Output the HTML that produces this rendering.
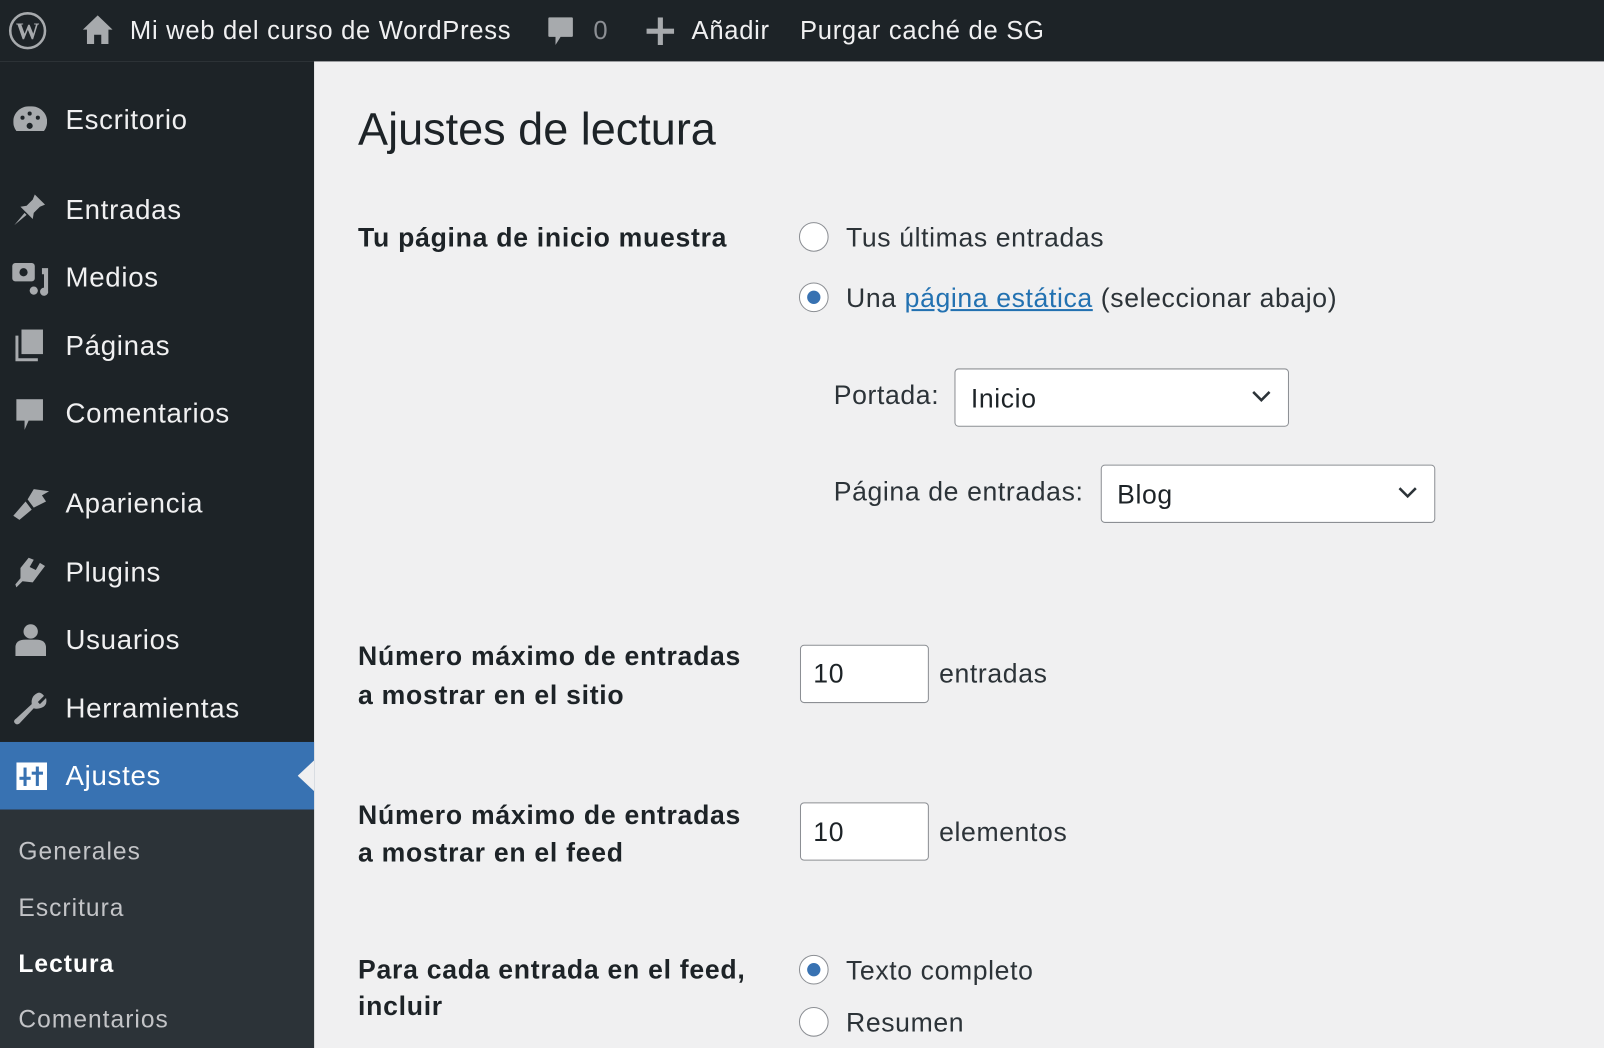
<!DOCTYPE html>
<html><head><meta charset="utf-8"><style>
html,body{margin:0;padding:0;overflow:hidden;background:#f0f0f1}
body{width:1604px;height:1048px}
#w{position:absolute;left:0;top:0;width:1568px;height:1024px;transform:scale(1.023,1.0234);transform-origin:0 0;font-family:"Liberation Sans",sans-serif;background:#f0f0f1}
.a{position:absolute;white-space:nowrap;line-height:34px;height:34px}
#top{position:absolute;left:0;top:0;width:1568px;height:60px;background:#1d2327}
#side{position:absolute;left:0;top:60px;width:307px;height:964px;background:#1d2327}
#sub{position:absolute;left:0;top:791px;width:307px;height:233px;background:#2c3338}
#aj{position:absolute;left:0;top:725px;width:307px;height:66px;background:#3872b2}
.tb{color:#f0f0f1;font-size:25px;letter-spacing:0.7px}
.m{color:#f0f0f1;font-size:27px;left:64px;letter-spacing:0.7px}
.s{color:#c3c4c7;font-size:24px;left:18px;letter-spacing:1px}
.ic{position:absolute;fill:#a7aaad}
.l{color:#1d2327;font-size:26px;font-weight:bold;left:350px;letter-spacing:0.7px}
.t{color:#2c3338;font-size:26px;letter-spacing:0.6px}
.r{position:absolute;width:27px;height:27px;border:1.5px solid #8c8f94;border-radius:50%;background:#fff}
.r.c::after{content:"";position:absolute;left:7px;top:7px;width:13px;height:13px;border-radius:50%;background:#3872b2}
.sel{position:absolute;height:57px;border:1px solid #8c8f94;border-radius:4px;background:#fff;box-sizing:border-box}
.in{position:absolute;width:126px;height:57px;border:1px solid #8c8f94;border-radius:4px;background:#fff;box-sizing:border-box}
</style></head><body><div id="w">
<div id="top"></div>
<svg class="ic" style="left:8px;top:11px" width="38" height="38" viewBox="0 0 38 38"><circle cx="19" cy="19" r="17" fill="none" stroke="#a7aaad" stroke-width="2.5"/><text x="19" y="27" text-anchor="middle" font-family="Liberation Serif" font-size="23" font-weight="bold" fill="#a7aaad">W</text></svg>
<svg class="ic" style="left:80px;top:14px" width="31" height="30" viewBox="0 0 31 30"><path d="M15.5 1 L1 15 L5 15 L5 29 L12 29 L12 20 L19 20 L19 29 L26 29 L26 15 L30 15 Z"/></svg>
<div class="a tb" style="left:127px;top:13px">Mi web del curso de WordPress</div>
<svg class="ic" style="left:535px;top:16px" width="26" height="30" viewBox="0 0 26 30"><path d="M2 1 H24 Q25 1 25 2 V19 Q25 20 24 20 H13 L8 28 V20 H2 Q1 20 1 19 V2 Q1 1 2 1Z"/></svg>
<div class="a tb" style="left:580px;top:13px;color:#8c8f94">0</div>
<svg class="ic" style="left:632px;top:17px" width="27" height="27"><rect x="11" y="0" width="5" height="27"/><rect x="0" y="11" width="27" height="5"/></svg>
<div class="a tb" style="left:676px;top:13px">Añadir</div>
<div class="a tb" style="left:782px;top:13px">Purgar caché de SG</div>

<div id="side"></div><div id="sub"></div><div id="aj"></div>
<svg style="position:absolute;left:291px;top:743px" width="16" height="30"><path d="M16 0 L0 15 L16 30Z" fill="#f0f0f1"/></svg>
<svg class="ic" style="left:13px;top:102px" width="33" height="30" viewBox="0 0 33 30"><path d="M16.5 2 A15 15 0 0 0 3 26 L30 26 A15 15 0 0 0 16.5 2Z"/><circle cx="16" cy="21" r="3" fill="#1d2327"/><circle cx="9" cy="13" r="2" fill="#1d2327"/><circle cx="16" cy="9" r="2" fill="#1d2327"/><circle cx="24" cy="13" r="2" fill="#1d2327"/></svg>
<div class="a m" style="top:100px">Escritorio</div>
<svg class="ic" style="left:12px;top:188px" width="34" height="34" viewBox="0 0 34 34"><path d="M22 2 L32 12 L27 14 L21 20 L20 26 L8 14 L14 13 L20 7Z M12 20 L2 32 L14 22Z"/></svg>
<div class="a m" style="top:188px">Entradas</div>
<svg class="ic" style="left:11px;top:254px" width="38" height="36" viewBox="0 0 38 36"><rect x="1" y="3" width="22" height="18" rx="3"/><circle cx="12" cy="12" r="4" fill="#1d2327"/><path d="M30 8 H36 V30 A4 4 0 1 1 32 27 V14 H30Z"/><circle cx="22" cy="30" r="4"/></svg>
<div class="a m" style="top:254px">Medios</div>
<svg class="ic" style="left:15px;top:322px" width="28" height="32"><rect x="6" y="0" width="21" height="24"/><path d="M0 6 H3 V28 H22 V31 H0Z"/></svg>
<div class="a m" style="top:321px">Páginas</div>
<svg class="ic" style="left:15px;top:390px" width="28" height="32"><path d="M1 0 H27 V21 H13 L9 30 V21 H1Z"/></svg>
<div class="a m" style="top:387px">Comentarios</div>
<svg class="ic" style="left:11px;top:476px" width="38" height="34" viewBox="0 0 38 34"><path d="M22 2 L37 4 L30 8 L34 14 L22 20 L16 12Z M14 14 L20 22 L8 32 L2 28Z"/></svg>
<div class="a m" style="top:475px">Apariencia</div>
<svg class="ic" style="left:14px;top:543px" width="32" height="32" viewBox="0 0 32 32"><path d="M14 2 L19 4 L15 11 L21 14 L25 7 L30 10 L24 18 L18 26 L8 25 L2 31 L1 28 L6 22 L6 12Z"/></svg>
<div class="a m" style="top:542px">Plugins</div>
<svg class="ic" style="left:15px;top:609px" width="30" height="32"><circle cx="15" cy="8" r="7"/><path d="M0 32 V24 Q0 16 10 16 H20 Q30 16 30 24 V32Z"/></svg>
<div class="a m" style="top:608px">Usuarios</div>
<svg class="ic" style="left:13px;top:676px" width="34" height="34" viewBox="0 0 34 34"><path d="M30 4 L24 10 L26 12 L32 6 Q34 14 26 16 Q22 17 20 16 L6 31 Q3 33 1 30 Q0 28 3 26 L18 12 Q17 4 24 1 Q27 0 30 4Z"/></svg>
<div class="a m" style="top:675px">Herramientas</div>
<svg style="position:absolute;left:16px;top:745px" width="30" height="27"><rect width="30" height="27" fill="#fff"/><rect x="7" y="5" width="3" height="18" fill="#3872b2"/><rect x="3" y="14" width="11" height="3" fill="#3872b2"/><rect x="19" y="4" width="3" height="19" fill="#3872b2"/><rect x="15" y="9" width="11" height="3" fill="#3872b2"/></svg>
<div class="a m" style="top:741px;color:#fff">Ajustes</div>
<div class="a s" style="top:816px">Generales</div>
<div class="a s" style="top:871px">Escritura</div>
<div class="a s" style="top:926px;color:#fff;font-weight:bold">Lectura</div>
<div class="a s" style="top:980px">Comentarios</div>

<div class="a" style="left:350px;top:102px;font-size:44px;line-height:50px;height:50px;color:#1d2327">Ajustes de lectura</div>
<div class="a l" style="top:215px">Tu página de inicio muestra</div>
<div class="r" style="left:781px;top:217px"></div>
<div class="a t" style="left:827px;top:215px">Tus últimas entradas</div>
<div class="r c" style="left:781px;top:276px"></div>
<div class="a t" style="left:827px;top:274px">Una <span style="color:#2271b1;text-decoration:underline">página estática</span> (seleccionar abajo)</div>
<div class="a t" style="left:815px;top:369px">Portada:</div>
<div class="sel" style="left:933px;top:360px;width:327px"></div>
<div class="a t" style="left:949px;top:372px;color:#1d2327">Inicio</div>
<svg style="position:absolute;left:1223px;top:381px" width="20" height="14"><path d="M2 2 L10 10 L18 2" fill="none" stroke="#2c3338" stroke-width="2.5"/></svg>
<div class="a t" style="left:815px;top:463px">Página de entradas:</div>
<div class="sel" style="left:1076px;top:454px;width:327px"></div>
<div class="a t" style="left:1092px;top:466px;color:#1d2327">Blog</div>
<svg style="position:absolute;left:1366px;top:475px" width="20" height="14"><path d="M2 2 L10 10 L18 2" fill="none" stroke="#2c3338" stroke-width="2.5"/></svg>

<div class="a l" style="top:624px">Número máximo de entradas</div>
<div class="a l" style="top:662px">a mostrar en el sitio</div>
<div class="in" style="left:782px;top:630px"></div>
<div class="a t" style="left:795px;top:641px;color:#1d2327">10</div>
<div class="a t" style="left:918px;top:641px">entradas</div>
<div class="a l" style="top:779px">Número máximo de entradas</div>
<div class="a l" style="top:816px">a mostrar en el feed</div>
<div class="in" style="left:782px;top:784px"></div>
<div class="a t" style="left:795px;top:796px;color:#1d2327">10</div>
<div class="a t" style="left:918px;top:796px">elementos</div>
<div class="a l" style="top:930px">Para cada entrada en el feed,</div>
<div class="a l" style="top:966px">incluir</div>
<div class="r c" style="left:781px;top:933px"></div>
<div class="a t" style="left:827px;top:931px">Texto completo</div>
<div class="r" style="left:781px;top:984px"></div>
<div class="a t" style="left:827px;top:982px">Resumen</div>
</div></body></html>
